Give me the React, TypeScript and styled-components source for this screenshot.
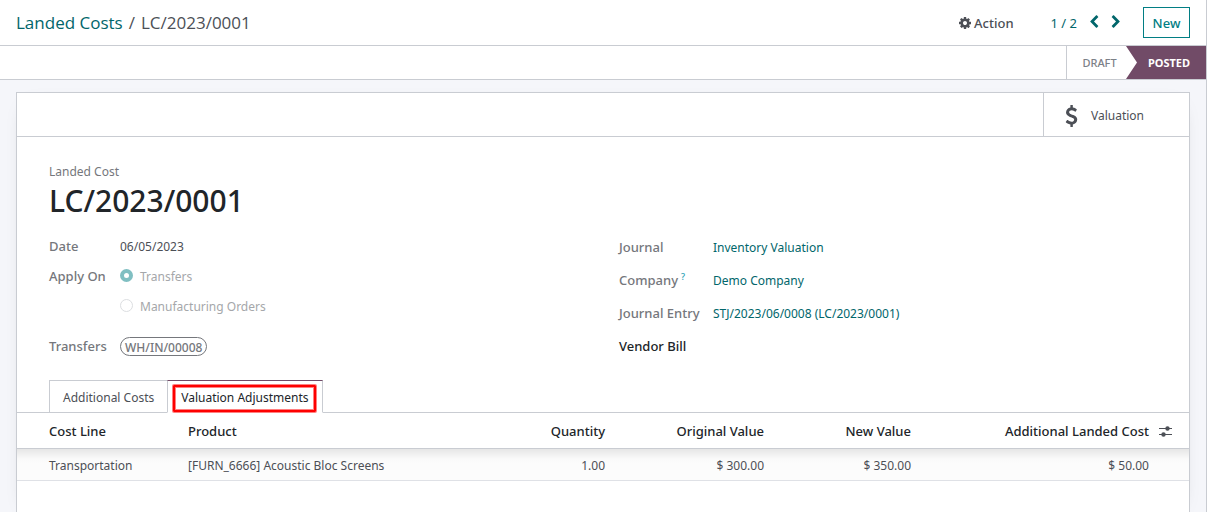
import React from "react";
import styled, { createGlobalStyle } from "styled-components";

const teal = "#017e84";
const link = "#01666b";
const line = "#c9ccd2";
const plum = "#714b67";
const body = "#4c4f56";
const muted = "#75777c";
const ink = "#212529";

const GlobalStyle = createGlobalStyle`
  * { box-sizing: border-box; }
  html, body, #root { height: 100%; }
  body {
    margin: 0;
    font: 12px/20px "Noto Sans", "Open Sans", sans-serif;
    color: ${body};
    background: #fff;
    overflow: hidden;
  }
  button { font: inherit; color: inherit; background: none; border: 0; padding: 0; cursor: pointer; }
  a { color: ${link}; text-decoration: none; }
`;

const Page = styled.div`
  display: flex;
  flex-direction: column;
  min-height: 100%;
  margin-right: 3px;
  border-right: 1px solid ${line};
  background: #f5f6fa;
`;

const ControlBar = styled.header`
  display: flex;
  align-items: center;
  justify-content: space-between;
  height: 46px;
  padding: 0 16px;
  background: #fff;
  border-bottom: 1px solid ${line};
`;

const Breadcrumb = styled.nav`
  display: flex;
  gap: 6px;
  font-family: "Open Sans", "Noto Sans", sans-serif;
  font-size: 17px;
  line-height: 24px;
`;

const Actions = styled.div`
  display: flex;
  align-items: center;
`;

const ActionButton = styled.button`
  display: flex;
  align-items: center;
  gap: 3px;
  margin-right: 37px;
  font-size: 13px;
  font-weight: 500;
`;

const Pager = styled.div`
  display: flex;
  align-items: center;
  gap: 12px;
  margin-right: 22px;
  font-size: 13px;
  color: ${link};
  button { display: flex; margin-bottom: 2px; }
`;

const NewButton = styled.button`
  width: 47px;
  height: 31px;
  border: 1px solid ${teal};
  color: ${teal};
  font-size: 13px;
  font-weight: 500;
`;

const StatusBar = styled.div`
  display: flex;
  justify-content: flex-end;
  height: 34px;
  background: #fff;
  border-bottom: 1px solid ${line};
`;

const Stage = styled.button<{ $active?: boolean }>`
  font-size: 11px;
  font-weight: ${(p) => (p.$active ? 700 : 500)};
  color: ${(p) => (p.$active ? "#fff" : "#7c8087")};
  background: ${(p) => (p.$active ? plum : "#fff")};
  width: ${(p) => (p.$active ? "80px" : "60px")};
  padding-left: 6px;
  border-left: ${(p) => (p.$active ? "0" : `1px solid ${line}`)};
  clip-path: ${(p) => (p.$active ? "polygon(0 0, 100% 0, 100% 100%, 0 100%, 11px 50%)" : "none")};
`;

const Sheet = styled.main`
  flex: 1;
  margin: 12px 16px 0;
  background: #fff;
  border: 1px solid ${line};
  border-bottom: 0;
  box-shadow: 0 5px 20px -15px rgba(0, 0, 0, 0.4);
`;

const ButtonBox = styled.div`
  display: flex;
  justify-content: flex-end;
  height: 44px;
  border-bottom: 1px solid ${line};
`;

const StatButton = styled.button`
  display: flex;
  align-items: center;
  gap: 13px;
  width: 146px;
  padding: 2px 0 0 21px;
  border-left: 1px solid ${line};
`;

const Heading = styled.div`
  padding: 25px 32px 0;
  color: ${muted};
`;

const Title = styled.h1`
  margin: 0;
  font-size: 30px;
  line-height: 38px;
  font-weight: 500;
  color: ${ink};
`;

const Columns = styled.div`
  display: grid;
  grid-template-columns: 1fr 1fr;
  gap: 32px;
  padding: 16px 32px 0;
`;

const Fields = styled.dl<{ $label: number; $gap: number; $top?: number }>`
  display: grid;
  grid-template-columns: ${(p) => p.$label}px 1fr;
  align-content: start;
  row-gap: ${(p) => p.$gap}px;
  margin: 0;
  padding-top: ${(p) => p.$top ?? 0}px;
  dd { margin: 0; line-height: 22px; }
`;

const Label = styled.dt<{ $strong?: boolean }>`
  font-size: 13px;
  font-weight: 500;
  white-space: nowrap;
  color: ${(p) => (p.$strong ? ink : muted)};
`;

const Help = styled.sup`
  margin-left: 3px;
  font-size: 9px;
  line-height: 0;
  color: #2a9fb5;
`;

const Options = styled.dd`
  display: grid;
  row-gap: 8px;
  padding-bottom: 10px;
`;

const Option = styled.label`
  display: flex;
  align-items: flex-start;
  gap: 7px;
  color: #a5a7aa;
`;

const Radio = styled.input`
  appearance: none;
  width: 13px;
  height: 13px;
  margin: 3px 0 0;
  border: 1px solid #dcdee1;
  border-radius: 50%;
  &:checked { border: 4px solid #80bfc2; }
`;

const Tag = styled.span`
  display: flex;
  width: fit-content;
  height: 19px;
  margin-top: 1px;
  padding: 0 4px;
  border: 1px solid #75777c;
  border-radius: 10px;
  line-height: 19px;
  font-weight: 500;
  color: ${muted};
`;

const Tabs = styled.div`
  display: flex;
  margin-top: 24px;
  padding-left: 32px;
  border-bottom: 1px solid ${line};
`;

const Tab = styled.button<{ $active?: boolean }>`
  position: relative;
  height: 33px;
  margin-bottom: -1px;
  padding: 2px 13px 0;
  margin-left: ${(p) => (p.$active ? "-1px" : "0")};
  border: 1px solid ${line};
  border-top-color: ${(p) => (p.$active ? plum : line)};
  border-bottom-color: ${(p) => (p.$active ? "#fff" : line)};
  background: #fff;
  color: ${(p) => (p.$active ? ink : body)};
`;

const Marker = styled.span`
  position: absolute;
  inset: 4px 6px 0 5px;
  border: 2px solid #fe0000;
  border-radius: 1px;
  box-shadow: 0 0 0 1px #ff8080, inset 0 0 0 1px #ff8080;
`;

const Table = styled.table`
  width: 100%;
  table-layout: fixed;
  border-collapse: separate;
  border-spacing: 0;
  th, td { padding: 0 5px; text-align: left; white-space: nowrap; }
  th { height: 36px; font-size: 13px; font-weight: 500; color: ${ink}; border-bottom: 1px solid ${line}; }
  td { height: 32px; padding-top: 2px; border-bottom: 1px solid #dfe1e6; }
  th:first-child, td:first-child { padding-left: 32px; }
  tbody tr { background: linear-gradient(#e6e6e6, #fafafa 10px, #fcfcfc 14px); }
  button { display: flex; color: ${body}; }
`;

const Column = styled.col<{ $width: number }>`
  width: ${(p) => p.$width}px;
`;

const NumHead = styled.th`
  && { text-align: right; }
`;

const NumCell = styled.td`
  && { text-align: right; }
`;

const CogIcon = () => (
  <svg width="12" height="14" viewBox="0 0 1536 1792" fill="currentColor">
    <path d="M1024 896q0-106-75-181t-181-75-181 75-75 181 75 181 181 75 181-75 75-181zm512-109v222q0 12-8 23t-20 13l-185 28q-19 54-39 91 35 50 107 138 10 12 10 25t-9 23q-27 37-99 108t-94 71q-12 0-26-9l-138-108q-44 23-91 38-16 136-29 186-7 28-36 28h-222q-14 0-24.500-8.500t-11.500-21.500l-28-184q-49-16-90-37l-141 107q-10 9-25 9-14 0-25-11-126-114-165-168-7-10-7-23 0-12 8-23 15-21 51-66.500t54-70.500q-27-50-41-99l-183-27q-13-2-21-12.500t-8-23.500v-222q0-12 8-23t19-13l186-28q14-46 39-92-40-57-107-138-10-12-10-24 0-10 9-23 26-36 98.500-107.500t94.500-71.500q13 0 26 10l138 107q44-23 91-38 16-136 29-186 7-28 36-28h222q14 0 24.500 8.500t11.500 21.500l28 184q49 16 90 37l142-107q9-9 24-9 13 0 25 10 129 119 165 170 7 8 7 22 0 12-8 23-15 21-51 66.500t-54 70.500q26 50 41 98l183 28q13 2 21 12.500t8 23.500z" />
  </svg>
);

const ChevronLeft = () => (
  <svg width="10" height="14" viewBox="0 0 1280 1792" fill="currentColor">
    <path d="M1171 301l-531 531 531 531q19 19 19 45t-19 45l-166 166q-19 19-45 19t-45-19l-742-742q-19-19-19-45t19-45l742-742q19-19 45-19t45 19l166 166q19 19 19 45t-19 45z" />
  </svg>
);

const ChevronRight = () => (
  <svg width="10" height="14" viewBox="0 0 1280 1792" fill="currentColor">
    <path d="M1107 877l-742 742q-19 19-45 19t-45-19l-166-166q-19-19-19-45t19-45l531-531-531-531q-19-19-19-45t19-45l166-166q19-19 45-19t45 19l742 742q19 19 19 45t-19 45z" />
  </svg>
);

const DollarIcon = () => (
  <svg width="13" height="22" viewBox="0 0 1024 1792" fill="currentColor">
    <path d="M978 1185q0 153-99.500 263.500t-258.500 136.500v175q0 14-9 23t-23 9h-135q-13 0-22.500-9.500t-9.500-22.500v-175q-66-9-127.500-31t-101.500-44.500-74-48-46.500-37.500-17.500-18q-17-21-2-41l103-135q7-10 23-12 15-2 24 9l2 2q113 99 243 125 37 8 74 8 81 0 142.500-43t61.500-122q0-28-15-53t-33.500-42-58.500-37.500-66-32-80-32.500q-39-16-61.500-25t-61.500-26.500-62.500-31-56.500-35.500-53.500-42.500-43.500-49-35.500-58-21-66.500-8.500-78q0-138 98-242t255-134v-180q0-13 9.500-22.500t22.500-9.500h135q14 0 23 9t9 23v176q57 6 110.500 23t87 33.500 63.500 37.500 39 29 15 14q17 18 5 38l-81 146q-8 15-23 16-14 3-27-7-3-3-14.500-12t-39-26.500-58.500-32-74.500-26-85.500-11.500q-95 0-155 43t-60 111q0 26 8.500 48t29.500 41.500 39.500 33 56 31 60.500 27 70 27.500q53 20 81 31.500t76 35 75.500 42.500 62 50 53 63.500 31.500 76.500 13 94z" />
  </svg>
);

const SlidersIcon = () => (
  <svg width="13" height="12" viewBox="0 0 13 12" fill="currentColor">
    <path d="M0 3h13v1H0zM0 9h13v1H0z" />
    <circle cx="8.500" cy="3.500" r="2.200" />
    <circle cx="4.500" cy="9.500" r="2.200" />
  </svg>
);

export default function App() {
  return (
    <>
      <GlobalStyle />
      <Page>
        <ControlBar>
          <Breadcrumb>
            <a href="#costs">Landed Costs</a>
            <span>/</span>
            <span>LC/2023/0001</span>
          </Breadcrumb>
          <Actions>
            <ActionButton><CogIcon />Action</ActionButton>
            <Pager>
              <span>1 / 2</span>
              <button aria-label="Previous"><ChevronLeft /></button>
              <button aria-label="Next"><ChevronRight /></button>
            </Pager>
            <NewButton>New</NewButton>
          </Actions>
        </ControlBar>
        <StatusBar>
          <Stage>DRAFT</Stage>
          <Stage $active>POSTED</Stage>
        </StatusBar>
        <Sheet>
          <ButtonBox>
            <StatButton><DollarIcon />Valuation</StatButton>
          </ButtonBox>
          <Heading>
            Landed Cost
            <Title>LC/2023/0001</Title>
          </Heading>
          <Columns>
            <Fields $label={71} $gap={8}>
              <Label>Date</Label>
              <dd>06/05/2023</dd>
              <Label>Apply On</Label>
              <Options>
                <Option><Radio type="radio" name="target" defaultChecked disabled />Transfers</Option>
                <Option><Radio type="radio" name="target" disabled />Manufacturing Orders</Option>
              </Options>
              <Label>Transfers</Label>
              <dd><Tag>WH/IN/00008</Tag></dd>
            </Fields>
            <Fields $label={94} $gap={11} $top={1}>
              <Label>Journal</Label>
              <dd><a href="#journal">Inventory Valuation</a></dd>
              <Label>Company<Help>?</Help></Label>
              <dd><a href="#company">Demo Company</a></dd>
              <Label>Journal Entry</Label>
              <dd><a href="#entry">STJ/2023/06/0008 (LC/2023/0001)</a></dd>
              <Label $strong>Vendor Bill</Label>
              <dd />
            </Fields>
          </Columns>
          <Tabs>
            <Tab>Additional Costs</Tab>
            <Tab $active>Valuation Adjustments<Marker /></Tab>
          </Tabs>
          <Table>
            <colgroup>
              <Column $width={166} />
              <col />
              <Column $width={110} />
              <Column $width={159} />
              <Column $width={147} />
              <Column $width={238} />
              <Column $width={35} />
            </colgroup>
            <thead>
              <tr>
                <th>Cost Line</th>
                <th>Product</th>
                <NumHead>Quantity</NumHead>
                <NumHead>Original Value</NumHead>
                <NumHead>New Value</NumHead>
                <NumHead>Additional Landed Cost</NumHead>
                <th><button aria-label="Optional columns"><SlidersIcon /></button></th>
              </tr>
            </thead>
            <tbody>
              <tr>
                <td>Transportation</td>
                <td>[FURN_6666] Acoustic Bloc Screens</td>
                <NumCell>1.00</NumCell>
                <NumCell>$ 300.00</NumCell>
                <NumCell>$ 350.00</NumCell>
                <NumCell>$ 50.00</NumCell>
                <td />
              </tr>
            </tbody>
          </Table>
        </Sheet>
      </Page>
    </>
  );
}
